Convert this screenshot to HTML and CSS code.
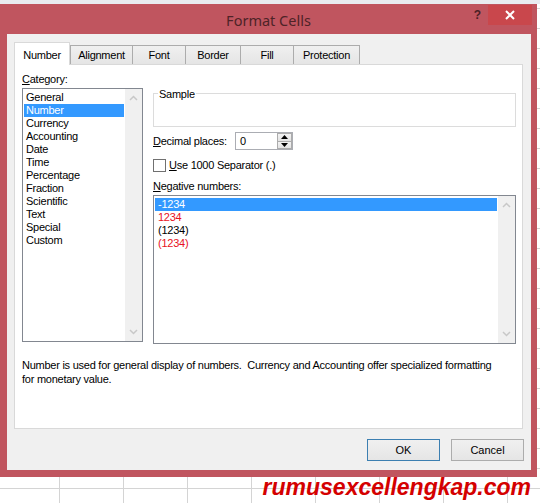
FILE: index.html
```html
<!DOCTYPE html>
<html lang="en">
<head>
    <meta charset="UTF-8">
    <title>Format Cells</title>
    <link rel="stylesheet" href="styles.css">
</head>
<body>
    <div class="excel-top"></div>
    <div class="window">
        <div class="titlebar">
            <span class="title">Format Cells</span>
            <div class="controls">
                <span class="help">?</span>
                <span class="close">
                    <svg width="10" height="10" viewBox="0 0 10 10"><path d="M1 1 L9 9 M9 1 L1 9" stroke="#fff" stroke-width="2"/></svg>
                </span>
            </div>
        </div>
        <div class="dialog">
            <div class="tabs">
                <div class="tab active">Number</div>
                <div class="tab">Alignment</div>
                <div class="tab">Font</div>
                <div class="tab">Border</div>
                <div class="tab">Fill</div>
                <div class="tab">Protection</div>
            </div>
            <div class="panel">
                <div class="columns">
                    <div class="left">
                        <div class="label"><u>C</u>ategory:</div>
                        <div class="listbox category">
                            <div class="items">
                                <div class="item">General</div>
                                <div class="item selected">Number</div>
                                <div class="item">Currency</div>
                                <div class="item">Accounting</div>
                                <div class="item">Date</div>
                                <div class="item">Time</div>
                                <div class="item">Percentage</div>
                                <div class="item">Fraction</div>
                                <div class="item">Scientific</div>
                                <div class="item">Text</div>
                                <div class="item">Special</div>
                                <div class="item">Custom</div>
                            </div>
                            <div class="scrollbar">
                                <svg width="9" height="6" viewBox="0 0 9 6"><path d="M1 5 L4.5 1.5 L8 5" fill="none" stroke="#c8c8c8" stroke-width="1.5"/></svg>
                                <svg width="9" height="6" viewBox="0 0 9 6"><path d="M1 1 L4.5 4.5 L8 1" fill="none" stroke="#c8c8c8" stroke-width="1.5"/></svg>
                            </div>
                        </div>
                    </div>
                    <div class="right">
                        <div class="sample">
                            <span class="sample-label">Sample</span>
                        </div>
                        <div class="decimal-row">
                            <span class="decimal-label"><u>D</u>ecimal places:</span>
                            <div class="spinner">
                                <span class="spin-value">0</span>
                                <div class="spin-buttons">
                                    <div class="spin-btn"><svg width="7" height="4" viewBox="0 0 7 4"><path d="M0 4 L3.5 0 L7 4 Z" fill="#000"/></svg></div>
                                    <div class="spin-btn"><svg width="7" height="4" viewBox="0 0 7 4"><path d="M0 0 L3.5 4 L7 0 Z" fill="#000"/></svg></div>
                                </div>
                            </div>
                        </div>
                        <div class="check-row">
                            <span class="checkbox"></span>
                            <span><u>U</u>se 1000 Separator (.)</span>
                        </div>
                        <div class="label neg-label"><u>N</u>egative numbers:</div>
                        <div class="listbox negative">
                            <div class="items">
                                <div class="item selected">-1234</div>
                                <div class="item red">1234</div>
                                <div class="item">(1234)</div>
                                <div class="item red">(1234)</div>
                            </div>
                            <div class="scrollbar">
                                <svg width="9" height="6" viewBox="0 0 9 6"><path d="M1 5 L4.5 1.5 L8 5" fill="none" stroke="#c8c8c8" stroke-width="1.5"/></svg>
                                <svg width="9" height="6" viewBox="0 0 9 6"><path d="M1 1 L4.5 4.5 L8 1" fill="none" stroke="#c8c8c8" stroke-width="1.5"/></svg>
                            </div>
                        </div>
                    </div>
                </div>
                <p class="description">Number is used for general display of numbers.&nbsp; Currency and Accounting offer specialized formatting<br>for monetary value.</p>
            </div>
            <div class="buttons">
                <button class="btn default">OK</button>
                <button class="btn">Cancel</button>
            </div>
        </div>
    </div>
    <div class="watermark">rumusexcellengkap.com</div>
</body>
</html>
```

FILE: styles.css
```css
body {
    margin: 0;
    width: 540px;
    height: 503px;
    overflow: hidden;
    position: relative;
    font-family: "Liberation Sans", Arial, sans-serif;
    font-size: 11px;
    color: #000;
    background-color: #fff;
    background-image:
        linear-gradient(to right, #d4d4d4 1px, transparent 1px),
        linear-gradient(to bottom, #d4d4d4 1px, transparent 1px);
    background-size: 64px 100%, 100% 20px;
    background-position: 59px 0, 0 488px;
}

.excel-top {
    height: 4px;
    background: #e9ecf0;
}

.window {
    width: 537px;
    background: #c0555f;
    padding-bottom: 7px;
}

.titlebar {
    height: 30px;
    display: grid;
    grid-template-columns: 1fr auto 1fr;
    align-items: start;
}

.title {
    grid-column: 2;
    font-family: "Noto Sans", sans-serif;
    font-size: 14.5px;
    line-height: 32px;
    color: #4e2327;
}

.controls {
    grid-column: 3;
    justify-self: end;
    display: flex;
    align-items: center;
    padding-right: 5px;
}

.help {
    font-family: "Liberation Sans", sans-serif;
    font-weight: bold;
    font-size: 12px;
    color: #4a2025;
    margin-right: 7px;
}

.close {
    width: 44px;
    height: 20px;
    margin-top: 1px;
    background: #c9474c;
    display: flex;
    align-items: center;
    justify-content: center;
}

.dialog {
    margin: 0 6px 0 7px;
    background: #f0f0f0;
    padding: 8px 8px 9px 7px;
    letter-spacing: -0.25px;
}

.tabs {
    display: flex;
    align-items: flex-end;
    height: 22px;
}

.tab {
    box-sizing: border-box;
    height: 19px;
    line-height: 18px;
    border: 1px solid #acacac;
    border-bottom: none;
    margin-left: -1px;
    background: linear-gradient(#f0f0f0, #e5e5e5);
    text-align: center;
}

.tab:nth-child(1) { width: 56px; margin-left: 0; }
.tab:nth-child(2) { width: 64px; }
.tab:nth-child(3) { width: 54px; }
.tab:nth-child(4) { width: 56px; }
.tab:nth-child(5) { width: 54px; }
.tab:nth-child(6) { width: 67px; }

.tab.active {
    height: 23px;
    line-height: 19px;
    padding-top: 3px;
    margin-bottom: -1px;
    background: #fff;
    border-color: #d9d9d9;
    position: relative;
    z-index: 1;
}

.tab.active + .tab {
    margin-left: 0;
    width: 63px;
}

.panel {
    box-sizing: border-box;
    height: 365px;
    background: #fff;
    border: 1px solid #d9d9d9;
    padding: 8px 6px 0 7px;
}

.columns {
    display: flex;
    gap: 10px;
}

.left {
    width: 121px;
}

.right {
    width: 363px;
    padding-top: 20px;
}

.label {
    line-height: 13px;
}

.listbox {
    border: 1px solid #828790;
    display: flex;
    background: #fff;
}

.listbox .items {
    flex: 1;
    padding: 2px 1px 0 1px;
}

.item {
    line-height: 13px;
    padding-left: 2px;
}

.item.selected {
    background: #3399ff;
    color: #fff;
}

.item.red {
    color: #e81123;
}

.scrollbar {
    width: 17px;
    background: #f0f0f0;
    display: flex;
    flex-direction: column;
    justify-content: space-between;
    align-items: center;
    padding: 6px 0;
}

.category {
    margin-top: 2px;
    height: 252px;
}

.negative {
    height: 147px;
}

.negative .item {
    padding-left: 3px;
}

.sample {
    box-sizing: border-box;
    height: 34px;
    border: 1px solid #dcdcdc;
    padding-left: 4px;
}

.sample-label {
    display: inline-block;
    margin-top: -6px;
    padding: 0 1px;
    line-height: 13px;
    background: #fff;
    vertical-align: top;
}

.decimal-row {
    display: flex;
    align-items: center;
    margin-top: 5px;
}

.decimal-label {
    width: 82px;
}

.spinner {
    width: 56px;
    height: 16px;
    border: 1px solid #abadb3;
    display: flex;
    background: #fff;
}

.spin-value {
    flex: 1;
    padding-left: 4px;
    line-height: 16px;
}

.spin-buttons {
    width: 15px;
    display: flex;
    flex-direction: column;
}

.spin-btn {
    flex: 1;
    border: 1px solid #acacac;
    background: linear-gradient(#f3f3f3, #e3e3e3);
    display: flex;
    align-items: center;
    justify-content: center;
}

.spin-btn + .spin-btn {
    border-top: none;
}

.check-row {
    display: flex;
    align-items: center;
    gap: 3px;
    margin-top: 9px;
    line-height: 13px;
}

.checkbox {
    width: 11px;
    height: 11px;
    border: 1px solid #707070;
    background: #fff;
}

.neg-label {
    margin-top: 8px;
    margin-bottom: 2px;
}

.description {
    margin: 14px 0 0 0;
    line-height: 14px;
    white-space: nowrap;
}

.buttons {
    display: flex;
    justify-content: flex-end;
    gap: 11px;
    margin-top: 10px;
    margin-right: -1px;
}

.btn {
    box-sizing: border-box;
    width: 73px;
    height: 22px;
    font-family: "Liberation Sans", Arial, sans-serif;
    font-size: 11px;
    border: 1px solid #acacac;
    background: linear-gradient(#f0f0f0, #e5e5e5);
    color: #000;
    padding: 0;
}

.btn.default {
    border-color: #3c7fb1;
}

.watermark {
    position: absolute;
    right: 9px;
    top: 476px;
    font-family: "Liberation Sans", Arial, sans-serif;
    font-weight: bold;
    font-style: italic;
    font-size: 23px;
    line-height: 23px;
    color: #d40000;
}
```
